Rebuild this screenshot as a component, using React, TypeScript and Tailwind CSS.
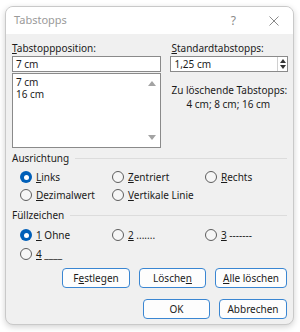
import { ReactNode } from "react";

const font = { fontFamily: '"Noto Sans", sans-serif' };

const Radio = ({ checked, children }: { checked?: boolean; children: ReactNode }) => (
  <div className="flex items-center h-[18px] whitespace-nowrap">
    {checked ? (
      <span className="w-[12px] h-[12px] rounded-full bg-[#005fb8] flex items-center justify-center shrink-0">
        <span className="w-[5px] h-[5px] rounded-full bg-white" />
      </span>
    ) : (
      <span className="w-[12px] h-[12px] rounded-full border border-[#5d5d5d] bg-[#f6f6f6] shrink-0" />
    )}
    <span className="ml-[4px]">{children}</span>
  </div>
);

const Btn = ({ children, className = "" }: { children: ReactNode; className?: string }) => (
  <div
    className={`h-[20px] rounded-[4px] border border-[#3a86d2] bg-[#fdfdfd] flex items-center justify-center whitespace-nowrap ${className}`}
  >
    {children}
  </div>
);

const Group = ({ title, children }: { title: string; children: ReactNode }) => (
  <div>
    <div className="flex items-center h-[15px]">
      <span>{title}</span>
      <span className="flex-1 h-px bg-[#dcdcdc] ml-[6px]" />
    </div>
    {children}
  </div>
);

const Triangle = ({ down }: { down?: boolean }) => (
  <svg width="8" height="5" viewBox="0 0 8 5">
    <path d={down ? "M0 0 H8 L4 5 Z" : "M0 5 H8 L4 0 Z"} fill="#a3a3a3" />
  </svg>
);

export default function App() {
  return (
    <div className="w-[300px] h-[332px] bg-white pt-[6px] pl-[5px] text-[10px] text-[#1b1b1b]" style={font}>
      <div className="w-[289px] h-[319px] rounded-[8px] border border-[#c9c9c9] bg-[#f0f0f0] shadow-[0_2px_6px_rgba(0,0,0,0.18)] overflow-hidden flex flex-col">
        {/* title bar */}
        <div className="h-[27px] bg-white flex items-center pl-[8px] pr-[14px] shrink-0">
          <span className="text-[#9a9a9a] text-[11px]">Tabstopps</span>
          <span className="ml-auto text-[#8a8a8a] text-[12px]">?</span>
          <svg className="ml-[33px]" width="10" height="10" viewBox="0 0 10 10">
            <path d="M0.5 0.5 L9.5 9.5 M9.5 0.5 L0.5 9.5" stroke="#8a8a8a" strokeWidth="1" />
          </svg>
        </div>

        <div className="pl-[6px] pr-[5px] pt-[7px]">
          <div className="flex gap-[9px]">
            {/* left column */}
            <div className="w-[150px]">
              <div className="h-[15px] leading-[15px]">
                <u>T</u>abstoppposition:
              </div>
              <div className="h-[16px] border border-[#8a8a8a] bg-white pl-[3px] leading-[14px]">7 cm</div>
              <div className="mt-[1px] h-[75px] border border-[#8a8a8a] bg-white flex">
                <div className="flex-1 pl-[3px] pt-[2px] leading-[12px]">
                  <div>7 cm</div>
                  <div>16 cm</div>
                </div>
                <div className="w-[16px] flex flex-col items-center justify-between py-[7px]">
                  <Triangle />
                  <Triangle down />
                </div>
              </div>
            </div>

            {/* right column */}
            <div className="w-[118px] whitespace-nowrap">
              <div className="h-[15px] leading-[15px] pl-[1px]">
                <u>S</u>tandardtabstopps:
              </div>
              <div className="h-[16px] border border-[#8a8a8a] bg-white flex">
                <span className="flex-1 pl-[3px] leading-[14px]">1,25 cm</span>
                <div className="w-[10px] border-l border-[#d0d0d0] flex flex-col items-center justify-center gap-[2px]">
                  <svg width="6" height="4" viewBox="0 0 6 4">
                    <path d="M0 4 H6 L3 0 Z" fill="#333" />
                  </svg>
                  <svg width="6" height="4" viewBox="0 0 6 4">
                    <path d="M0 0 H6 L3 4 Z" fill="#333" />
                  </svg>
                </div>
              </div>
              <div className="mt-[11px] pl-[1px] leading-[14px]">Zu löschende Tabstopps:</div>
              <div className="pl-[16px] leading-[14px]">4 cm; 8 cm; 16 cm</div>
            </div>
          </div>

          <div className="mt-[3px] pr-[1px]">
            <Group title="Ausrichtung">
              <div className="grid grid-cols-[92px_93px_1fr] pl-[8px] mt-[2px]">
                <Radio checked>
                  <u>L</u>inks
                </Radio>
                <Radio>
                  <u>Z</u>entriert
                </Radio>
                <Radio>
                  <u>R</u>echts
                </Radio>
                <Radio>
                  <u>D</u>ezimalwert
                </Radio>
                <Radio>
                  <u>V</u>ertikale Linie
                </Radio>
              </div>
            </Group>
          </div>

          <div className="mt-[4px] pr-[1px]">
            <Group title="Füllzeichen">
              <div className="grid grid-cols-[92px_93px_1fr] pl-[8px] mt-[3px] gap-y-[1px]">
                <Radio checked>
                  <u>1</u> Ohne
                </Radio>
                <Radio>
                  <u>2</u> .......
                </Radio>
                <Radio>
                  <u>3</u> -------
                </Radio>
                <Radio>
                  <u>4</u> ____
                </Radio>
              </div>
            </Group>
          </div>

          <div className="flex justify-end gap-[9px] mt-[5px] pr-[1px]">
            <Btn className="w-[68px]">
              F<u>e</u>stlegen
            </Btn>
            <Btn className="w-[67px]">
              Lösche<u>n</u>
            </Btn>
            <Btn className="w-[72px]">
              <u>A</u>lle löschen
            </Btn>
          </div>
          <div className="flex justify-end gap-[9px] mt-[11px] pr-[1px]">
            <Btn className="w-[67px] border-[#1f75c9]">OK</Btn>
            <Btn className="w-[68px]">Abbrechen</Btn>
          </div>
        </div>
      </div>
    </div>
  );
}
